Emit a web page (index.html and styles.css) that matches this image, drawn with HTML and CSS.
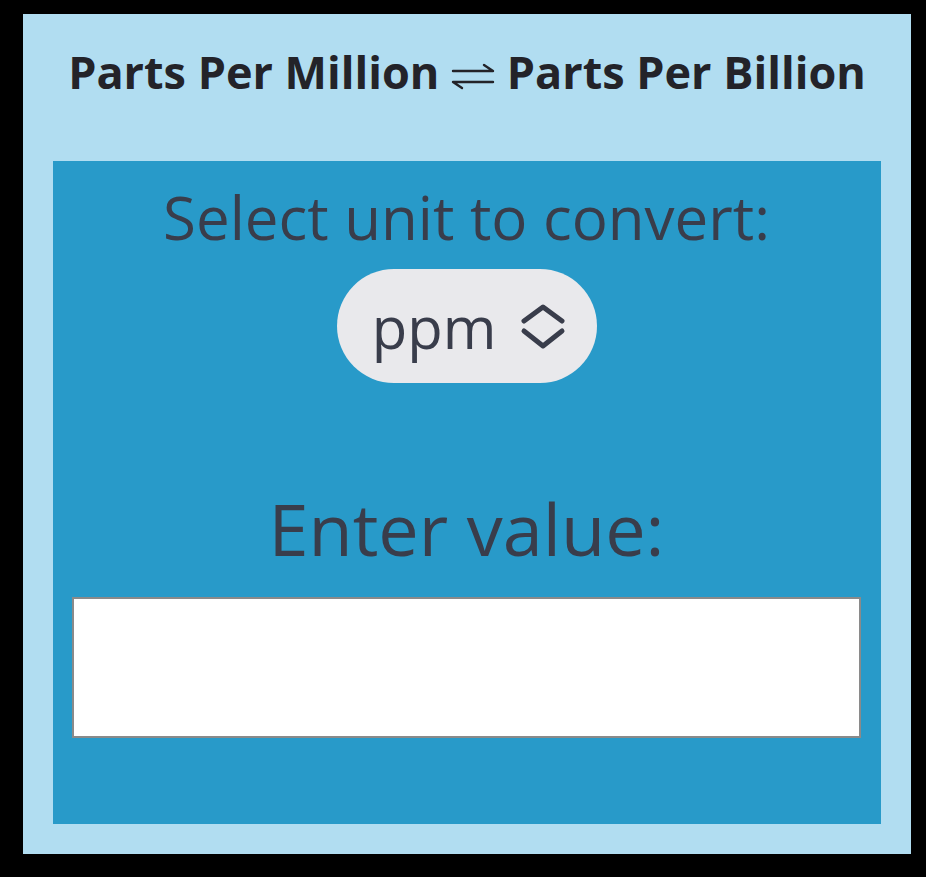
FILE: index.html
```html
<!DOCTYPE html>
<html lang="en">
<head>
    <meta charset="UTF-8">
    <meta name="viewport" content="width=device-width, initial-scale=1.0">
    <title>Parts Per Million to Parts Per Billion</title>
    <link rel="stylesheet" href="styles.css">
</head>
<body>

    <div class="converter">
        <h1 class="converter-title">
            Parts Per Million
            <svg class="swap" width="44" height="32" viewBox="0 0 44 32" aria-label="⇌">
                <path d="M2 12 L42 12 L33 6" />
                <path d="M42 23 L2 23 L11 29" />
            </svg>
            Parts Per Billion
        </h1>

        <div class="converter-panel">
            <label class="field-label" for="unitSelect">Select unit to convert:</label>
            <div class="unit-select" id="unitSelect">
                <span>ppm</span>
                <svg class="chevrons" width="46" height="48" viewBox="0 0 46 48">
                    <path d="M4 19 L23 5 L42 19" />
                    <path d="M4 29 L23 44 L42 29" />
                </svg>
            </div>

            <label class="field-label big" for="valueInput">Enter value:</label>
            <input class="value-input" id="valueInput" type="text">
        </div>
    </div>

</body>
</html>
```

FILE: styles.css
```css
body {
    margin: 0;
    background: #000;
    font-family: "Open Sans", "Noto Sans", sans-serif;
}

.converter {
    width: 888px;
    height: 840px;
    margin: 14px 0 0 23px;
    padding: 28px 30px 30px;
    box-sizing: border-box;
    background-color: #b1ddf1;
    display: flex;
    flex-direction: column;
}

.converter-title {
    margin: 0 0 59px;
    height: 60px;
    font-size: 45px;
    line-height: 60px;
    font-weight: 700;
    color: #232329;
    text-align: center;
    white-space: nowrap;
}

.swap {
    vertical-align: -2px;
    fill: none;
    stroke: #232329;
    stroke-width: 2.4;
    stroke-linecap: round;
    stroke-linejoin: round;
}

.converter-panel {
    flex: 1;
    background-color: #289ac9;
    padding: 21px 20px 0 19px;
    display: flex;
    flex-direction: column;
    align-items: center;
}

.field-label {
    font-size: 60px;
    line-height: 70px;
    color: #393d4b;
}

.field-label.big {
    font-size: 72px;
    line-height: 84px;
    margin-top: 103px;
}

.unit-select {
    margin-top: 17px;
    width: 260px;
    height: 114px;
    padding-left: 5px;
    box-sizing: border-box;
    border-radius: 57px;
    background-color: #e9e9ec;
    color: #393d4b;
    font-size: 58px;
    display: flex;
    align-items: center;
    justify-content: center;
    gap: 24px;
}

.chevrons {
    fill: none;
    stroke: #393d4b;
    stroke-width: 5;
    stroke-linecap: round;
    stroke-linejoin: round;
}

.value-input {
    margin-top: 27px;
    width: 100%;
    height: 141px;
    box-sizing: border-box;
    border: 2px solid #8a8a8a;
    background: #fff;
}
```
